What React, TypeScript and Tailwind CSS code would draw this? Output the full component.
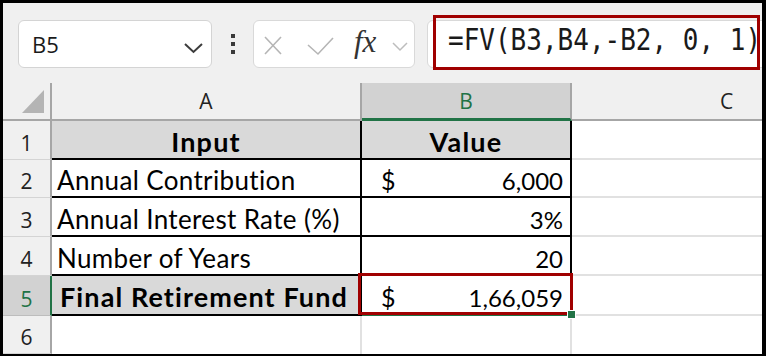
import React from "react";

const cellFont = { fontFamily: "Lato, 'Open Sans', sans-serif" } as React.CSSProperties;
const uiFont = { fontFamily: "'Open Sans', 'Noto Sans', sans-serif" } as React.CSSProperties;

export default function App() {
  return (
    <div className="w-[766px] h-[356px] bg-black pt-[3px] pl-[3px] pr-[4px] pb-[2px] box-border">
      <div className="h-full w-full bg-[#f0f0f0] flex flex-col overflow-hidden">
        {/* Toolbar */}
        <div className="h-[80px] shrink-0 flex items-start">
          {/* Name box */}
          <div className="shrink-0 ml-[15px] mt-[17px] w-[194px] h-[48px] bg-white border border-[#d4d4d4] rounded-[6px] relative flex items-center">
            <span className="pl-[13px] text-[22px] text-[#1a1a1a] leading-none" style={uiFont}>
              B5
            </span>
            <svg className="absolute left-0 top-0" width="194" height="48" viewBox="0 0 194 48">
              <polyline points="166,23 174.5,31 183,23" fill="none" stroke="#3c3c3c" strokeWidth="2" />
            </svg>
          </div>
          {/* dots */}
          <div className="shrink-0 w-[41px] h-[48px] mt-[17px] flex flex-col items-center justify-center gap-[4px]">
            <div className="w-[4px] h-[4px] bg-[#3a3a3a]" />
            <div className="w-[4px] h-[4px] bg-[#3a3a3a]" />
            <div className="w-[4px] h-[4px] bg-[#3a3a3a]" />
          </div>
          {/* Buttons */}
          <div className="shrink-0 mt-[17px] w-[162px] h-[48px] bg-white border border-[#d9d9d9] rounded-[6px] relative">
            <svg className="absolute left-0 top-0" width="162" height="48" viewBox="0 0 162 48">
              <line x1="11" y1="16" x2="27" y2="33" stroke="#b5b5b5" strokeWidth="1.6" />
              <line x1="27" y1="16" x2="11" y2="33" stroke="#b5b5b5" strokeWidth="1.6" />
              <polyline points="54,24 64,33 79,17" fill="none" stroke="#b5b5b5" strokeWidth="1.6" />
              <polyline points="139,22 146,29 153,22" fill="none" stroke="#bdbdbd" strokeWidth="1.5" />
            </svg>
            <span
              className="absolute left-[100px] top-[5px] text-[31px] italic leading-none text-[#333]"
              style={{ fontFamily: "'Liberation Serif', 'DejaVu Serif', serif" }}
            >
              fx
            </span>
          </div>
          {/* Formula */}
          <div className="shrink-0 ml-[12px] mt-[17px] w-[360px] h-[48px] bg-white border border-[#d9d9d9] rounded-[6px] relative">
            <div className="absolute left-[5px] top-[-6px] w-[327px] h-[55px] border-[3px] border-[#a00000]" />
            <span
              className="absolute left-[20px] top-[4px] text-[26px] leading-none text-[#1a1a1a] whitespace-pre origin-top scale-y-[1.14]"
              style={{ fontFamily: "'DejaVu Sans Mono', 'Liberation Mono', monospace" }}
            >
              =FV(B3,B4,-B2, 0, 1)
            </span>
          </div>
        </div>

        {/* Sheet */}
        <div
          className="flex-1 grid grid-cols-[49px_310px_210px_190px] grid-rows-[38px_39px_38px_39px_39px_40px_38px]"
          style={cellFont}
        >
          {/* header row */}
          <div className="relative bg-[#f0f0f0] border-r-2 border-b-2 border-[#a6a6a6]">
            <svg className="absolute left-0 top-0" width="47" height="36" viewBox="0 0 47 36">
              <polygon points="41,7 41,30 19,30" fill="#b4b4b4" />
            </svg>
          </div>
          <div className="bg-[#f0f0f0] border-r-2 border-b-2 border-[#a6a6a6] flex items-end justify-center pb-[7px] text-[21px] leading-none text-[#222]" style={uiFont}>A</div>
          <div className="bg-[#d2d2d2] border-r-2 border-[#a6a6a6] border-b-[3px] border-b-[#217346] flex items-end justify-center pb-[6px] text-[21px] leading-none text-[#217346]" style={uiFont}>B</div>
          <div className="bg-[#f0f0f0] border-b-2 border-[#a6a6a6] flex items-end pb-[7px] pl-[148px] text-[21px] leading-none text-[#222]" style={uiFont}>C</div>

          {/* row 1 */}
          <RowNum n="1" />
          <div className="bg-[#d9d9d9] border-r-2 border-b-2 border-black flex items-end justify-center pb-[3px] text-[27px] leading-none tracking-[1.2px] font-bold text-black">Input</div>
          <div className="bg-[#d9d9d9] border-r-2 border-b-2 border-black flex items-end justify-center pb-[3px] text-[27px] leading-none tracking-[1.2px] font-bold text-black">Value</div>
          <div className="bg-white border-b-2 border-[#e1e1e1]" />

          {/* row 2 */}
          <RowNum n="2" />
          <div className="bg-white border-r-2 border-b-2 border-black flex items-end pl-[5px] pb-[3px] text-[26px] leading-none tracking-[0.35px] text-black">Annual Contribution</div>
          <div className="bg-white border-r-2 border-b-2 border-black flex items-end justify-between pl-[19px] pr-[7px] pb-[3px] leading-none text-black">
            <span className="text-[25px]">$</span>
            <span className="text-[24px]">6,000</span>
          </div>
          <div className="bg-white border-b-2 border-[#e1e1e1]" />

          {/* row 3 */}
          <RowNum n="3" />
          <div className="bg-white border-r-2 border-b-2 border-black flex items-end pl-[5px] pb-[3px] text-[26px] leading-none tracking-[0.35px] text-black">Annual Interest Rate (%)</div>
          <div className="bg-white border-r-2 border-b-2 border-black flex items-end justify-end pr-[7px] pb-[3px] text-[24px] leading-none text-black">3%</div>
          <div className="bg-white border-b-2 border-[#e1e1e1]" />

          {/* row 4 */}
          <RowNum n="4" />
          <div className="bg-white border-r-2 border-b-2 border-black flex items-end pl-[5px] pb-[3px] text-[26px] leading-none tracking-[0.35px] text-black">Number of Years</div>
          <div className="bg-white border-r-2 border-b-2 border-black flex items-end justify-end pr-[7px] pb-[3px] text-[24px] leading-none text-black">20</div>
          <div className="bg-white border-b-2 border-[#e1e1e1]" />

          {/* row 5 */}
          <div className="bg-[#d2d2d2] border-r-2 border-r-[#217346] border-b border-b-[#bdbdbd] flex items-end justify-center pb-[5px] text-[21px] leading-none text-[#217346]" style={uiFont}>5</div>
          <div className="bg-[#d9d9d9] border-r-2 border-b-2 border-black flex items-end pl-[8px] pb-[4px] text-[27px] leading-none tracking-[1.1px] font-bold text-black">Final Retirement Fund</div>
          <div className="relative bg-white border-b-2 border-[#217346] flex items-end justify-between pl-[19px] pr-[9px] pb-[4px] leading-none text-black">
            <span className="text-[25px]">$</span>
            <span className="text-[24px]">1,66,059</span>
            <div className="absolute left-[-4px] top-[-3px] right-[-1px] bottom-[-1px] border-[3px] border-[#a00000]" />
            <div className="absolute right-[-4px] bottom-[-5px] w-[9px] h-[9px] bg-[#217346] border border-white" />
          </div>
          <div className="bg-white border-b-2 border-[#e1e1e1]" />

          {/* row 6 */}
          <RowNum n="6" />
          <div className="bg-white border-r-2 border-[#e1e1e1]" />
          <div className="bg-white border-r-2 border-[#e1e1e1]" />
          <div className="bg-white" />
        </div>
      </div>
    </div>
  );
}

function RowNum({ n }: { n: string }) {
  return (
    <div
      className="bg-[#f0f0f0] border-r-2 border-r-[#a6a6a6] border-b border-b-[#d4d4d4] flex items-end justify-center pb-[5px] text-[21px] leading-none text-[#222]"
      style={uiFont}
    >
      {n}
    </div>
  );
}
